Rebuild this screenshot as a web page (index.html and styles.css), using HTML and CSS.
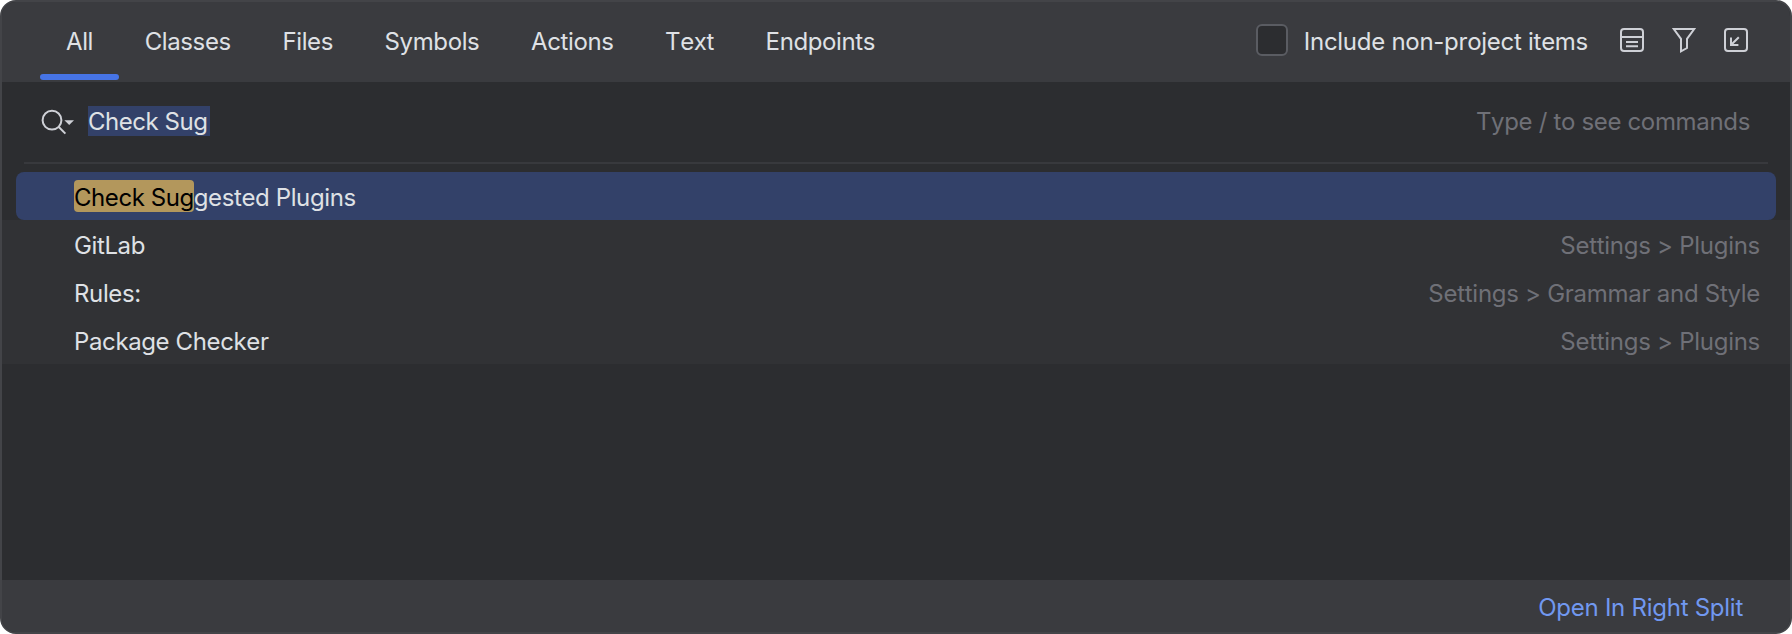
FILE: index.html
```
<!DOCTYPE html>
<html lang="en">
    <head>
        <meta charset="UTF-8">
        <title>Search Everywhere</title>
        <link rel="stylesheet" href="styles.css">
    </head>

    <body>
        <div class="popup">
            <div class="header">
                <div class="tabs">
                    <div class="tab active">All</div>
                    <div class="tab">Classes</div>
                    <div class="tab">Files</div>
                    <div class="tab">Symbols</div>
                    <div class="tab">Actions</div>
                    <div class="tab">Text</div>
                    <div class="tab">Endpoints</div>
                </div>
                <div class="tools">
                    <span class="checkbox"></span>
                    <span class="check-label">Include non-project items</span>
                    <svg class="icon" viewBox="0 0 16 16">
                        <rect x="2.5" y="2.5" width="11" height="11" rx="1.5"/>
                        <path d="M2.5 6.5H13.5M5 9H11M5 11.1H11"/>
                    </svg>
                    <svg class="icon" viewBox="0 0 16 16">
                        <path d="M2.9 2.5H13.1L9.5 7.4V12L6.5 13.7V7.4Z"/>
                    </svg>
                    <svg class="icon" viewBox="0 0 16 16">
                        <rect x="2.5" y="2.5" width="11" height="11" rx="1.5"/>
                        <path d="M9.4 6.6L5.6 10.4M5.5 6.7V10.5H9.2"/>
                    </svg>
                </div>
            </div>

            <div class="search">
                <svg class="search-icon" viewBox="0 0 20 16">
                    <circle cx="6" cy="6.1" r="4.7"/>
                    <path d="M9.4 9.5L12.7 12.8"/>
                    <path class="caret" d="M12.2 6.1H17L14.6 8.5Z"/>
                </svg>
                <span class="query">Check Sug</span>
                <span class="hint">Type / to see commands</span>
            </div>

            <div class="results">
                <div class="row selected"><span><span class="match">Check Sug</span>gested Plugins</span></div>
                <div class="row"><span>GitLab</span><span class="path">Settings &gt; Plugins</span></div>
                <div class="row"><span>Rules:</span><span class="path">Settings &gt; Grammar and Style</span></div>
                <div class="row"><span>Package Checker</span><span class="path">Settings &gt; Plugins</span></div>
            </div>

            <div class="footer">
                <a class="link">Open In Right Split</a>
            </div>
        </div>
    </body>
</html>
```
FILE: styles.css
```
* {
    box-sizing: border-box;
}

body {
    margin: 0;
    background-color: #ffffff;
    font-family: Inter, "Liberation Sans", sans-serif;
    font-size: 24px;
    font-kerning: none;
    letter-spacing: -0.38px;
    color: #dfe1e5;
}

.popup {
    display: flex;
    flex-direction: column;
    width: 1792px;
    height: 634px;
    border: 2px solid #434448;
    border-radius: 16px;
    background-color: #2c2d30;
    overflow: hidden;
    white-space: nowrap;
}

.header {
    display: flex;
    justify-content: space-between;
    height: 80px;
    padding: 0 38px;
    background-color: #3a3b3f;
}

.tabs {
    display: flex;
}

.tab {
    position: relative;
    padding: 0 25.6px 0 26px;
    line-height: 80px;
}

.tab.active::after {
    content: "";
    position: absolute;
    left: 0;
    right: 0;
    bottom: 2px;
    height: 6px;
    border-radius: 3px;
    background-color: #4674e6;
}

.tools {
    display: flex;
    align-items: center;
    height: 76px;
}

.checkbox {
    width: 32px;
    height: 32px;
    border: 2px solid #5a5c62;
    border-radius: 6px;
    background-color: #2c2d30;
}

.check-label {
    margin: 2px 8px 0 16px;
    letter-spacing: -0.28px;
}

.icon {
    width: 32px;
    height: 32px;
    margin-left: 20px;
    fill: none;
    stroke: #ced0d6;
}

.search {
    display: flex;
    align-items: center;
    height: 82px;
    margin: 0 22px;
    padding: 0 18px 2px 16px;
    border-bottom: 2px solid #38393d;
}

.search-icon {
    width: 40px;
    height: 32px;
    margin-top: 6px;
    fill: none;
    stroke: #ced0d6;
}

.search-icon .caret {
    fill: #ced0d6;
    stroke: none;
}

.query {
    height: 30px;
    margin-left: 8px;
    padding-right: 2px;
    line-height: 32px;
    letter-spacing: -0.46px;
    background-color: #334169;
}

.hint {
    margin-left: auto;
    letter-spacing: -0.33px;
    color: #6f7077;
}

.results {
    flex: 1;
    padding-top: 8px;
}

.row {
    display: flex;
    justify-content: space-between;
    height: 48px;
    padding: 0 30px 0 72px;
    line-height: 52px;
    background-color: #313235;
}

.row.selected {
    margin: 0 14px;
    padding: 0 16px 0 58px;
    border-radius: 8px;
    background-color: #334169;
}

.match {
    padding: 3px 0 0;
    border-radius: 4px;
    letter-spacing: -0.44px;
    background-color: #b3975c;
    color: #000000;
}

.path {
    letter-spacing: -0.27px;
    color: #6f7077;
}

.footer {
    display: flex;
    align-items: center;
    justify-content: flex-end;
    height: 52px;
    padding: 2px 47px 0 0;
    background-color: #3a3b3f;
}

.link {
    letter-spacing: -0.26px;
    color: #7198f0;
}
```
